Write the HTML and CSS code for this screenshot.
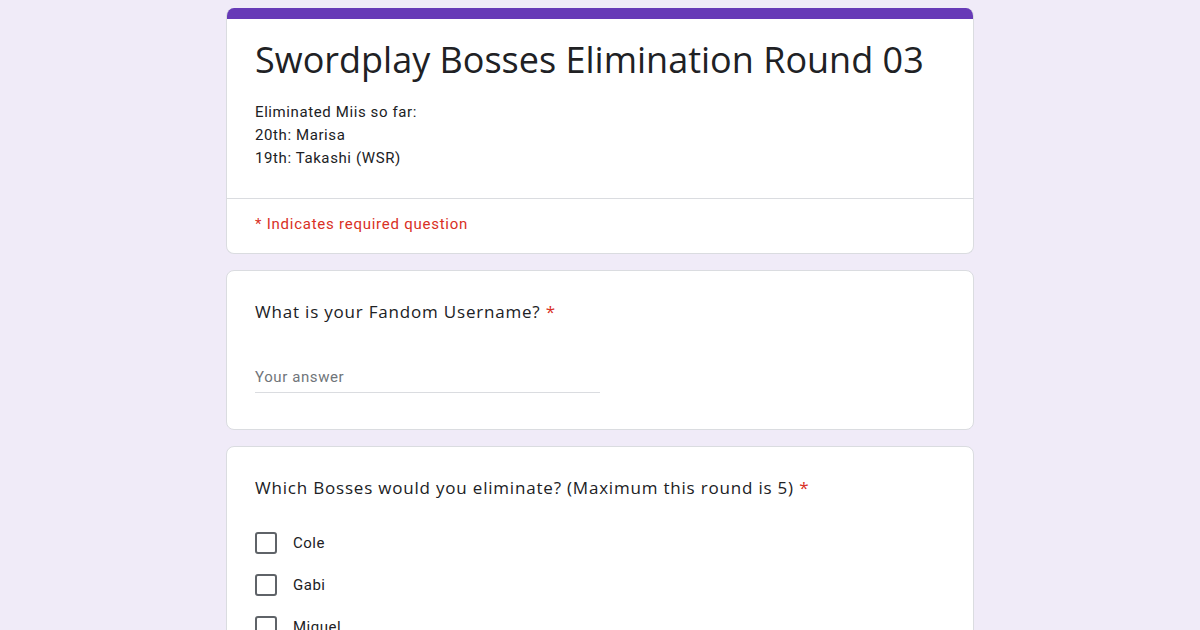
FILE: index.html
```
<!DOCTYPE html>
<html>
<head>
<meta charset="utf-8">
<link rel="stylesheet" href="styles.css">
</head>
<body>
<div class="page">
  <div class="card header-card">
    <div class="accent"></div>
    <div class="header-main">
      <h1 class="title">Swordplay Bosses Elimination Round 03</h1>
      <div class="desc">Eliminated Miis so far:<br>20th: Marisa<br>19th: Takashi (WSR)</div>
    </div>
    <div class="required-note">* Indicates required question</div>
  </div>

  <div class="card question-card">
    <div class="question">What is your Fandom Username? <span class="star">*</span></div>
    <div class="answer">Your answer</div>
  </div>

  <div class="card question-card">
    <div class="question">Which Bosses would you eliminate? (Maximum this round is 5) <span class="star">*</span></div>
    <div class="options">
      <div class="option"><span class="box"></span><span class="label">Cole</span></div>
      <div class="option"><span class="box"></span><span class="label">Gabi</span></div>
      <div class="option"><span class="box"></span><span class="label">Miguel</span></div>
      <div class="option"><span class="box"></span><span class="label">Hiroshi</span></div>
    </div>
  </div>
</div>
</body>
</html>
```
FILE: styles.css
```
html, body {
  margin: 0;
  padding: 0;
  background: #f0ebf8;
  height: 630px;
  overflow: hidden;
}
body {
  font-family: Roboto, "Liberation Sans", sans-serif;
  color: #202124;
}
.page {
  width: 748px;
  margin: 0 auto;
  padding-top: 8px;
  display: flex;
  flex-direction: column;
  gap: 16px;
}
.card {
  background: #fff;
  border: 1px solid #dadce0;
  border-radius: 8px;
  box-sizing: border-box;
}
.header-card {
  overflow: hidden;
  border-top: none;
}
.accent {
  height: 11px;
  background: #673ab7;
}
.header-main {
  padding: 17px 28px 28px;
  border-bottom: 1px solid #dadce0;
}
.title {
  margin: 0;
  font-family: "Open Sans", sans-serif;
  font-weight: 400;
  font-size: 36px;
  line-height: 48px;
  letter-spacing: 0;
  color: #202124;
}
.desc {
  margin-top: 17px;
  font-size: 15px;
  line-height: 23px;
  letter-spacing: 0.6px;
}
.required-note {
  padding: 15px 28px 19px;
  font-size: 15px;
  line-height: 20px;
  letter-spacing: 0.75px;
  color: #d93025;
}
.question-card {
  padding: 28px 28px 37px;
}
.answer-card {
}
.question {
  font-family: "Open Sans", sans-serif;
  font-size: 17px;
  line-height: 26px;
  letter-spacing: 0.8px;
  color: #202124;
}
.star {
  color: #d93025;
}
.answer {
  margin-top: 42px;
  margin-bottom: -1px;
  width: 345px;
  font-size: 15px;
  line-height: 20px;
  letter-spacing: 0.6px;
  color: #70757a;
  padding-bottom: 5px;
  border-bottom: 1px solid #dadce0;
}
.options {
  margin-top: 31px;
  display: flex;
  flex-direction: column;
  gap: 20px;
}
.option {
  display: flex;
  align-items: center;
  gap: 16px;
}
.box {
  width: 18px;
  height: 18px;
  border: 2px solid #5f6368;
  border-radius: 3px;
  flex: none;
}
.label {
  font-size: 15px;
  letter-spacing: 0.5px;
  color: #202124;
}
```
